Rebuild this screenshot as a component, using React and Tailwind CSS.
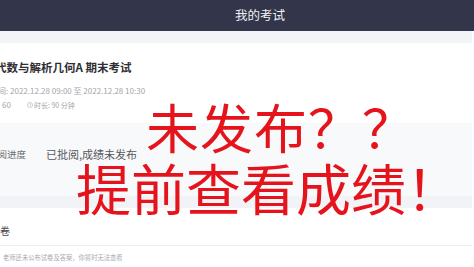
import React from 'react';

const cjk = { fontFamily: '"Noto Sans CJK SC", "Noto Sans", sans-serif' };

const ExamDetail = () => {
    return (
        <div className="relative w-[474px] h-[267px] overflow-hidden bg-white" style={cjk}>
            {/* 顶部标题栏 */}
            <div className="h-[31px] bg-[#33354a] flex items-center justify-center pl-[46px]">
                <span className="text-[12.5px] text-[#f1f1f4] leading-none">我的考试</span>
            </div>
            <div className="h-[12px] bg-[#f3f4f7] mr-[2px]" />

            {/* 考试信息 */}
            <div className="-ml-[5px] mt-[16px]">
                <h2 className="text-[11.5px] font-bold text-[#2f2f33] leading-[16px] whitespace-nowrap">
                    代数与解析几何A 期末考试
                </h2>
            </div>
            <div className="-ml-[10px] mt-[10px] text-[8px] leading-[12px] text-[#a3a5ab] whitespace-nowrap">
                时间: 2022.12.28 09:00 至 2022.12.28 10:30
            </div>
            <div className="-ml-[18px] mt-[2px] flex items-center text-[8px] leading-[12px] text-[#a3a5ab] whitespace-nowrap">
                <span>总分: 60</span>
                <span className="ml-[16px] flex items-center gap-[1px] text-[7px]">
                    <svg width="6" height="6" viewBox="0 0 12 12" fill="none" stroke="#b5b7bc" strokeWidth="1.4">
                        <circle cx="6" cy="6" r="5" />
                        <path d="M6 3v3l2 1.5" />
                    </svg>
                    时长: 90 分钟
                </span>
            </div>

            {/* 批阅进度 */}
            <div className="mt-[12px] mr-[2px] h-[73px] bg-[#f8f9fa] flex items-start pt-[23px] leading-[16px]">
                <span className="-ml-[12px] text-[9.5px] text-[#6b6d73] whitespace-nowrap">批阅进度</span>
                <span className="ml-[20px] text-[11px] text-[#55575c] whitespace-nowrap">已批阅,成绩未发布</span>
            </div>
            <div className="h-[12px] mr-[2px] bg-[#f2f3f6]" />

            {/* 查看试卷 */}
            <div className="mt-[16px] -ml-[30px] text-[10px] leading-[14px] text-[#48494e] whitespace-nowrap">查看试卷</div>
            <div className="mt-[7px] mr-[2px] border-t border-[#f0f0f2]" />
            <div className="mt-[8px] ml-[3px] text-[6.3px] leading-[8px] text-[#a8aaaf] whitespace-nowrap">
                老师还未公布试卷及答案，你暂时无法查看
            </div>

            {/* 红色大字 */}
            <div className="absolute left-[146px] top-[100px] text-[53px] leading-none tracking-[1px] text-[#e5141c] whitespace-nowrap">
                未发布？？
            </div>
            <div className="absolute left-[76px] top-[159px] text-[55px] leading-none text-[#e5141c] whitespace-nowrap">
                提前查看成绩！
            </div>
        </div>
    );
};

export default function App() {
    return <ExamDetail />;
}
